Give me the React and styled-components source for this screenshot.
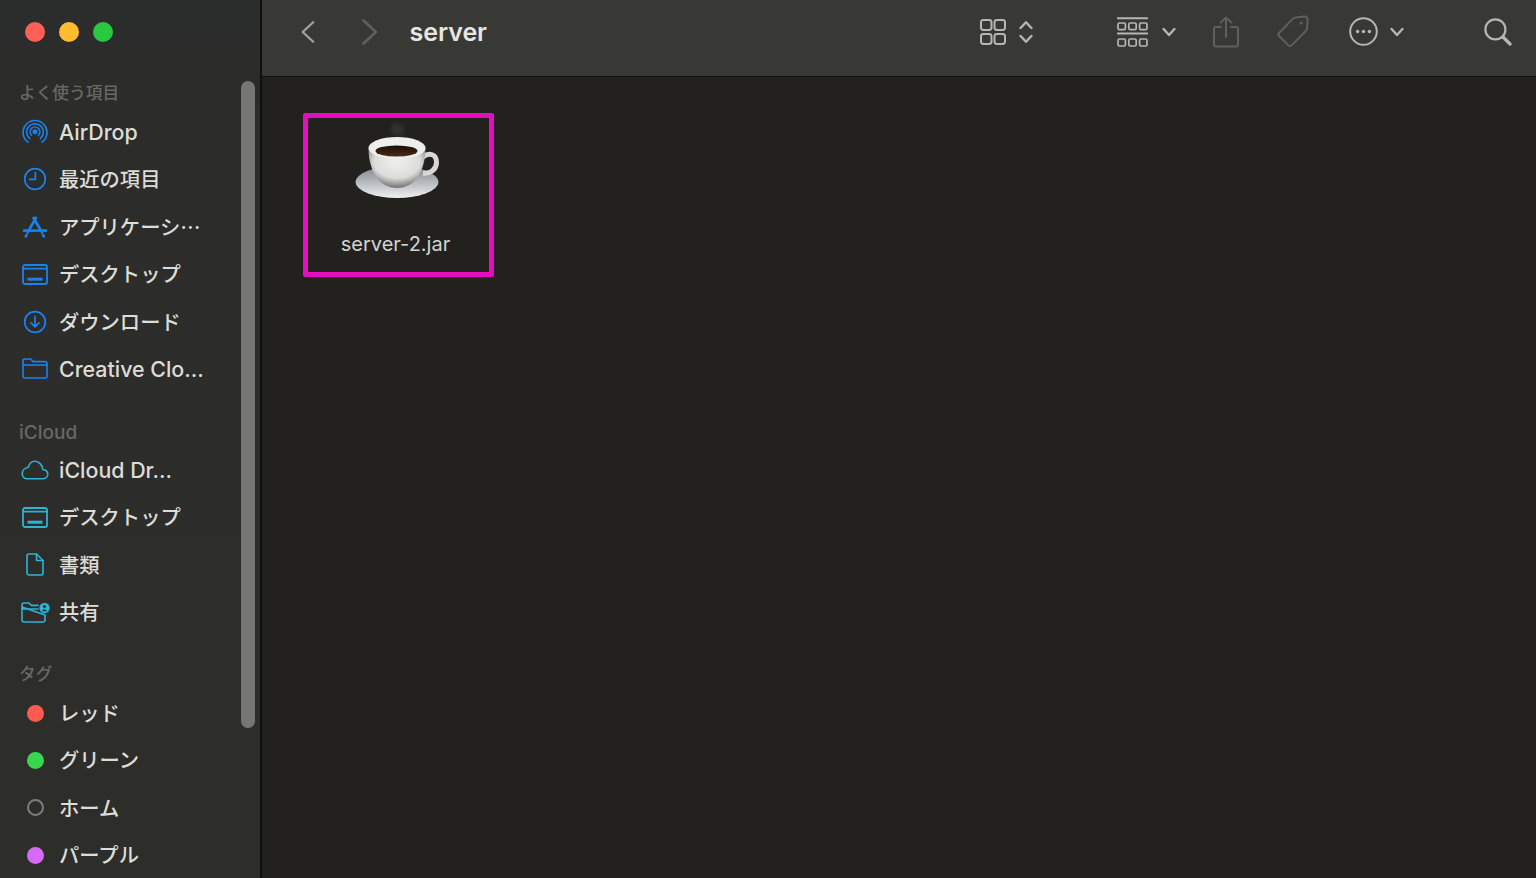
import React from 'react';
import styled, { createGlobalStyle } from 'styled-components';

const blue = '#1a82f0';
const cyan = '#2db3d3';
const bright = '#b6b7b0';
const dim = '#5f605b';

const GlobalStyle = createGlobalStyle`
  html, body {
    margin: 0;
    height: 100%;
    overflow: hidden;
    background: #22211e;
  }
`;

const Window = styled.div`
  display: flex;
  width: 1536px;
  height: 878px;
  overflow: hidden;
  font-family: Inter, "Noto Sans CJK JP", sans-serif;
`;

const Sidebar = styled.aside`
  position: relative;
  flex: 0 0 260px;
  height: 878px;
  overflow: hidden;
  background: linear-gradient(180deg, #2b2c2c 0, #2c2c2a 120px, #2d2d2a 100%);
  border-right: 2px solid #0f0f0e;
`;

const TrafficLights = styled.div`
  display: flex;
  gap: 14px;
  height: 20px;
  padding: 22px 0 38px 25px;
`;

const Light = styled.span`
  width: 20px;
  height: 20px;
  border-radius: 50%;
  background: ${(p) => p.$color};
`;

const Section = styled.section`
  margin-top: ${(p) => p.$top || 0}px;
`;

const SectionLabel = styled.div`
  height: 24px;
  margin-bottom: 4.3px;
  padding-left: 19px;
  font-family: ${(p) => (p.$latin ? 'Inter' : '"Noto Sans CJK JP"')}, sans-serif;
  font-size: ${(p) => (p.$latin ? 19 : 16.7)}px;
  font-weight: 500;
  line-height: ${(p) => (p.$latin ? 29 : 24)}px;
  color: #686864;
`;

const Row = styled.div`
  display: flex;
  align-items: center;
  height: 47.4px;
  padding-left: 18px;
  white-space: nowrap;
`;

const RowLabel = styled.span`
  margin-bottom: ${(p) => (p.$latin ? 0 : 2)}px;
  font-family: ${(p) => (p.$latin ? 'Inter' : '"Noto Sans CJK JP"')}, sans-serif;
  font-size: ${(p) => (p.$latin ? 21.4 : 20.3)}px;
  font-weight: ${(p) => (p.$latin ? 450 : 500)};
  line-height: 26px;
  color: #dcdcd8;
`;

const IconSlot = styled.span`
  display: flex;
  flex: 0 0 34px;
  align-items: center;
  justify-content: center;
  margin-right: 7px;
`;

const TagDot = styled.span`
  box-sizing: border-box;
  width: 17px;
  height: 17px;
  border-radius: 50%;
  background: ${(p) => (p.$hollow ? 'transparent' : p.$color)};
  border: ${(p) => (p.$hollow ? `2px solid ${p.$color}` : 'none')};
`;

const ScrollThumb = styled.div`
  position: absolute;
  top: 81px;
  left: 241px;
  width: 14px;
  height: 647px;
  border-radius: 7px;
  background: #767772;
`;

const Main = styled.main`
  flex: 1;
  display: flex;
  flex-direction: column;
  min-width: 0;
`;

const Toolbar = styled.header`
  display: flex;
  flex: 0 0 77px;
  align-items: center;
  padding: 0 24px 13px 39px;
  box-sizing: border-box;
  background: #383935;
  border-bottom: 1px solid #0f0f0e;
`;

const Title = styled.h1`
  margin: 0 0 0 32px;
  font-size: 25px;
  font-weight: 600;
  letter-spacing: -0.05px;
  color: #e6e6e2;
`;

const ToolGroup = styled.div`
  display: flex;
  align-items: center;
  gap: ${(p) => p.$gap || 14}px;
  margin-left: ${(p) => p.$left || 0}px;
`;

const Content = styled.div`
  flex: 1;
  padding: 36px 41px;
  background: #22211e;
`;

const FileTile = styled.div`
  display: flex;
  flex-direction: column;
  align-items: center;
  box-sizing: border-box;
  width: 191px;
  height: 164px;
  padding: 1px 0 0;
  border: 5px solid #e40dc0;
  border-radius: 2px;
`;

const FileName = styled.div`
  margin: 31px 6px 0 0;
  font-size: 20px;
  line-height: 24px;
  color: #d4d4d0;
`;

const line = { fill: 'none', strokeLinecap: 'round', strokeLinejoin: 'round' };

const AirDropIcon = () => (
  <svg width="26" height="26" viewBox="0 0 26 26" {...line} stroke={blue} strokeWidth="1.6">
    <path d="M6 23.2A12 12 0 1 1 20 23.2" />
    <path d="M7.7 19.6A8.4 8.4 0 1 1 18.3 19.6" />
    <path d="M9.6 16.2A4.8 4.8 0 1 1 16.4 16.2" />
    <circle cx="13" cy="12.8" r="1.7" fill={blue} />
  </svg>
);

const ClockIcon = () => (
  <svg width="24" height="24" viewBox="0 0 24 24" {...line} stroke={blue} strokeWidth="1.7">
    <circle cx="12" cy="12" r="10.3" />
    <path d="M12.4 5.4V12.4H6.6" />
  </svg>
);

const AppsIcon = () => (
  <svg width="26" height="22" viewBox="0 0 26 22" fill="none" stroke={blue} strokeWidth="2.6">
    <path d="M14.5 1L5 17.4M11 1L20.6 17.4" />
    <path d="M1 14.6H25" />
    <path strokeLinecap="round" d="M4.6 19L3.8 20.4M21 19L21.8 20.4" />
  </svg>
);

const DesktopIcon = ({ color }) => (
  <svg width="26" height="21" viewBox="0 0 26 21" {...line} stroke={color} strokeWidth="1.8">
    <rect x="1" y="1" width="24" height="19" rx="2" />
    <path d="M1 4.6H25" />
    <path strokeWidth="3" strokeLinecap="butt" d="M5.5 15.2H20.5" />
  </svg>
);

const DownloadIcon = () => (
  <svg width="24" height="24" viewBox="0 0 24 24" {...line} stroke={blue} strokeWidth="1.7">
    <circle cx="12" cy="12" r="10.3" />
    <path d="M12 6.4V16.6M8 12.8L12 16.8L16 12.8" />
  </svg>
);

const FolderIcon = () => (
  <svg width="26" height="21" viewBox="0 0 26 21" {...line} stroke={blue} strokeWidth="1.6">
    <path d="M1 6V3Q1 1 3 1H8.6L11 3.6H23Q25 3.6 25 5.6V18Q25 20 23 20H3Q1 20 1 18Z" />
    <path d="M1 7H25" />
  </svg>
);

const CloudIcon = () => (
  <svg width="28" height="20" viewBox="0 0 28 20" {...line} stroke={cyan} strokeWidth="1.6">
    <path d="M6.4 18.8H21.6C24.6 18.8 26.8 16.8 26.8 14.2C26.8 11.6 24.6 9.6 22 9.8C21.2 4.8 17.8 1.2 14 1.2C10.6 1.2 8.2 3.6 7.4 7.2C3.6 7.8 1.2 10.6 1.2 13.6C1.2 16.6 3.4 18.8 6.4 18.8Z" />
  </svg>
);

const DocIcon = () => (
  <svg width="18" height="23" viewBox="0 0 18 23" {...line} stroke={cyan} strokeWidth="1.6">
    <path d="M3 1H10.5L17 7.5V20Q17 22 15 22H3Q1 22 1 20V3Q1 1 3 1Z" />
    <path d="M10.5 1V7.5H17" />
  </svg>
);

const SharedIcon = () => (
  <svg width="29" height="21" viewBox="0 0 29 21" {...line} stroke={cyan} strokeWidth="1.6">
    <path d="M1 5V3Q1 1 3 1H8L10.4 3.4H17M24 13V18Q24 20 22 20H3Q1 20 1 18V5Z" />
    <path d="M1 7H17" />
    <circle cx="23.5" cy="6" r="5.2" fill={cyan} stroke="none" />
    <circle cx="23.5" cy="4.4" r="1.5" fill="#2c2c2a" stroke="none" />
    <path d="M20.8 9.2Q23.5 5.4 26.2 9.2Z" fill="#2c2c2a" stroke="none" />
  </svg>
);

const Chevron = ({ dir, color }) => (
  <svg width="16" height="26" viewBox="0 0 16 26" {...line} stroke={color} strokeWidth="2.6">
    <path d={dir === 'left' ? 'M14.5 1.5L2 13L14.5 24.5' : 'M1.5 1.5L14 13L1.5 24.5'} />
  </svg>
);

const GridIcon = () => (
  <svg width="26" height="26" viewBox="0 0 26 26" fill="none" stroke={bright} strokeWidth="2">
    <rect x="1" y="1" width="10.5" height="10" rx="2.4" />
    <rect x="14.5" y="1" width="10.5" height="10" rx="2.4" />
    <rect x="1" y="15" width="10.5" height="10" rx="2.4" />
    <rect x="14.5" y="15" width="10.5" height="10" rx="2.4" />
  </svg>
);

const UpDownIcon = () => (
  <svg width="14" height="24" viewBox="0 0 14 24" {...line} stroke={bright} strokeWidth="2.4">
    <path d="M1.6 8L7 2.2L12.4 8M1.6 16L7 21.8L12.4 16" />
  </svg>
);

const CaretIcon = () => (
  <svg width="14" height="10" viewBox="0 0 14 10" {...line} stroke={bright} strokeWidth="2.4">
    <path d="M1.6 2L7 8L12.4 2" />
  </svg>
);

const GroupIcon = () => (
  <svg width="31" height="30" viewBox="0 0 31 30" fill="none" stroke={bright} strokeWidth="1.7">
    <path strokeWidth="2" d="M0 1.2H31M0 16.6H31" />
    <rect x="1" y="6" width="7.4" height="6.6" rx="1.4" />
    <rect x="11.8" y="6" width="7.4" height="6.6" rx="1.4" />
    <rect x="22.6" y="6" width="7.4" height="6.6" rx="1.4" />
    <rect x="1" y="22" width="7.4" height="7" rx="1.4" />
    <rect x="11.8" y="22" width="7.4" height="7" rx="1.4" />
    <rect x="22.6" y="22" width="7.4" height="7" rx="1.4" />
  </svg>
);

const ShareIcon = () => (
  <svg width="26" height="32" viewBox="0 0 26 32" {...line} stroke={dim} strokeWidth="2">
    <path d="M8 11H3Q1 11 1 13V28.5Q1 30.5 3 30.5H23Q25 30.5 25 28.5V13Q25 11 23 11H18" />
    <path d="M13 21V1.5M7.6 6.6L13 1.5L18.4 6.6" />
  </svg>
);

const TagIcon = () => (
  <svg width="32" height="33" viewBox="0 0 32 33" {...line} stroke={dim} strokeWidth="2">
    <path d="M18.6 2.4L27.6 1.6Q30.6 1.6 30.6 4.6L30 13.4Q29.8 15 28.8 16L14.6 30.4Q13 32 11.4 30.4L1.8 20.8Q0.6 19.4 2 18L16 3.6Q17 2.6 18.6 2.4Z" />
    <circle cx="24" cy="8" r="1.6" fill={dim} stroke="none" />
  </svg>
);

const MoreIcon = () => (
  <svg width="29" height="29" viewBox="0 0 29 29" fill="none" stroke={bright} strokeWidth="2">
    <circle cx="14.5" cy="14.5" r="13.3" />
    <g fill={bright} stroke="none">
      <circle cx="8.6" cy="14.5" r="1.7" />
      <circle cx="14.5" cy="14.5" r="1.7" />
      <circle cx="20.4" cy="14.5" r="1.7" />
    </g>
  </svg>
);

const SearchIcon = () => (
  <svg width="28" height="28" viewBox="0 0 28 28" {...line} stroke={bright}>
    <circle cx="11.4" cy="11.4" r="10" strokeWidth="2.2" />
    <path d="M19 19L26 26" strokeWidth="3.2" />
  </svg>
);

const CoffeeCup = () => (
  <svg width="90" height="82" viewBox="0 0 90 82">
    <defs>
      <radialGradient id="cupBody" cx="50%" cy="35%" r="62%">
        <stop offset="0" stopColor="#efefee" />
        <stop offset="0.65" stopColor="#dcdcdb" />
        <stop offset="1" stopColor="#7d7d7c" />
      </radialGradient>
      <linearGradient id="saucer" x1="0" y1="0" x2="0" y2="1">
        <stop offset="0" stopColor="#7f858c" />
        <stop offset="0.6" stopColor="#c0c4c9" />
        <stop offset="1" stopColor="#eeeff0" />
      </linearGradient>
      <linearGradient id="coffee" x1="0" y1="0" x2="0" y2="1">
        <stop offset="0" stopColor="#180d07" />
        <stop offset="1" stopColor="#4f2d15" />
      </linearGradient>
      <filter id="steamBlur">
        <feGaussianBlur stdDeviation="2.4" />
      </filter>
      <filter id="edgeBlur">
        <feGaussianBlur stdDeviation="0.6" />
      </filter>
    </defs>
    <g filter="url(#steamBlur)" fill="#4c4c47" opacity="0.5">
      <ellipse cx="41" cy="10" rx="3" ry="7" />
      <ellipse cx="47" cy="11" rx="2.5" ry="6" />
    </g>
    <g filter="url(#edgeBlur)">
      <ellipse cx="43" cy="63" rx="41.5" ry="16" fill="url(#saucer)" />
      <path d="M69 38C75 33 83 35 82.5 44C82 51 76 55 69 54" fill="none" stroke="#d8d8d7" strokeWidth="5" />
      <path d="M14.5 29C14.5 50 24 69 43 69C62 69 71.5 50 71.5 29Z" fill="url(#cupBody)" />
      <ellipse cx="43" cy="29" rx="28.5" ry="11" fill="#eeeeed" />
      <ellipse cx="42.5" cy="32" rx="21" ry="5.6" fill="url(#coffee)" />
    </g>
  </svg>
);

const favorites = [
  { label: 'AirDrop', latin: true, icon: <AirDropIcon /> },
  { label: '最近の項目', icon: <ClockIcon /> },
  { label: 'アプリケーシ…', icon: <AppsIcon /> },
  { label: 'デスクトップ', icon: <DesktopIcon color={blue} /> },
  { label: 'ダウンロード', icon: <DownloadIcon /> },
  { label: 'Creative Clo...', latin: true, icon: <FolderIcon /> }
];

const icloud = [
  { label: 'iCloud Dr...', latin: true, icon: <CloudIcon /> },
  { label: 'デスクトップ', icon: <DesktopIcon color={cyan} /> },
  { label: '書類', icon: <DocIcon /> },
  { label: '共有', icon: <SharedIcon /> }
];

const tags = [
  { label: 'レッド', color: '#ff5b51' },
  { label: 'グリーン', color: '#37d84f' },
  { label: 'ホーム', color: '#7d7d79', hollow: true },
  { label: 'パープル', color: '#d56bf5' }
];

const renderRows = (rows) =>
  rows.map((row) => (
    <Row key={row.label}>
      <IconSlot>{row.icon}</IconSlot>
      <RowLabel $latin={row.latin}>{row.label}</RowLabel>
    </Row>
  ));

const App = () => {
  return (
    <Window>
      <GlobalStyle />
      <Sidebar>
        <TrafficLights>
          <Light $color="#fe5f57" />
          <Light $color="#febc2e" />
          <Light $color="#28c840" />
        </TrafficLights>
        <Section>
          <SectionLabel>よく使う項目</SectionLabel>
          {renderRows(favorites)}
        </Section>
        <Section $top={25.3}>
          <SectionLabel $latin>iCloud</SectionLabel>
          {renderRows(icloud)}
        </Section>
        <Section $top={25.3}>
          <SectionLabel>タグ</SectionLabel>
          {tags.map((tag) => (
            <Row key={tag.label}>
              <IconSlot>
                <TagDot $color={tag.color} $hollow={tag.hollow} />
              </IconSlot>
              <RowLabel>{tag.label}</RowLabel>
            </Row>
          ))}
        </Section>
        <ScrollThumb />
      </Sidebar>
      <Main>
        <Toolbar>
          <Chevron dir="left" color="#a3a49e" />
          <ToolGroup $left={47}>
            <Chevron dir="right" color={dim} />
          </ToolGroup>
          <Title>server</Title>
          <ToolGroup $left={493} $gap={13}>
            <GridIcon />
            <UpDownIcon />
          </ToolGroup>
          <ToolGroup $left={84}>
            <GroupIcon />
            <CaretIcon />
          </ToolGroup>
          <ToolGroup $left={37}>
            <ShareIcon />
          </ToolGroup>
          <ToolGroup $left={38}>
            <TagIcon />
          </ToolGroup>
          <ToolGroup $left={40} $gap={12}>
            <MoreIcon />
            <CaretIcon />
          </ToolGroup>
          <ToolGroup $left={80}>
            <SearchIcon />
          </ToolGroup>
        </Toolbar>
        <Content>
          <FileTile>
            <CoffeeCup />
            <FileName>server-2.jar</FileName>
          </FileTile>
        </Content>
      </Main>
    </Window>
  );
};

export default App;
